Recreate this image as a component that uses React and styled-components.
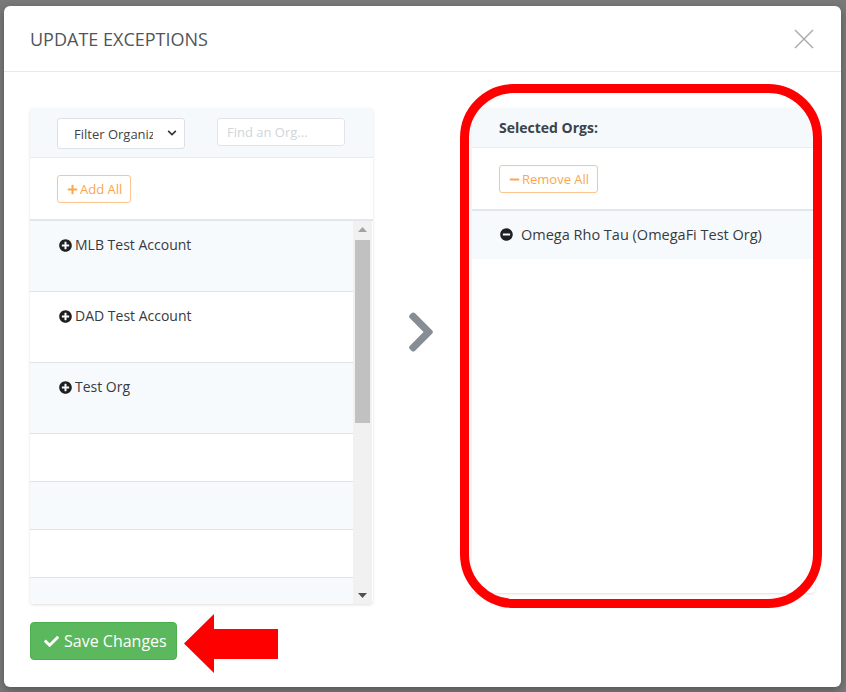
import React from "react";
import styled, { createGlobalStyle } from "styled-components";
import {
  FaPlusCircle,
  FaMinusCircle,
  FaPlus,
  FaMinus,
  FaCheck,
  FaChevronRight,
  FaChevronDown,
} from "react-icons/fa";

const GlobalStyle = createGlobalStyle`
  * { box-sizing: border-box; }
  body {
    margin: 0;
    background: #797979;
    font-family: "Open Sans", "Liberation Sans", sans-serif;
  }
`;

const Backdrop = styled.div`
  min-height: 692px;
  padding: 6px 5px 5px 4px;
`;

const Modal = styled.div`
  position: relative;
  width: 837px;
  height: 681px;
  background: #fff;
  border-radius: 6px;
  box-shadow: 0 3px 9px rgba(0, 0, 0, 0.3);
  display: flex;
  flex-direction: column;
`;

const Header = styled.div`
  height: 66px;
  padding: 0 27px 0 26px;
  border-bottom: 1px solid #e9e9e9;
  display: flex;
  align-items: center;
  justify-content: space-between;
`;

const Title = styled.h4`
  margin: 0;
  font-size: 18px;
  font-weight: 400;
  color: #505559;
`;

const CloseButton = styled.button`
  border: 0;
  background: none;
  padding: 0;
  width: 20px;
  height: 20px;
  cursor: pointer;
`;

const Body = styled.div`
  display: flex;
  padding: 36px 26px 0 26px;
`;

const LeftColumn = styled.div`
  width: 343px;
  display: flex;
  flex-direction: column;
`;

const Middle = styled.div`
  width: 99px;
  display: flex;
  justify-content: center;
  padding-top: 201px;
  padding-right: 3px;
  color: #868d94;
`;

const Panel = styled.div`
  width: 343px;
  height: ${(p) => p.$height}px;
  background: #fff;
  border-radius: 4px;
  box-shadow: 0 1px 3px rgba(0, 0, 0, 0.13);
  display: flex;
  flex-direction: column;
  overflow: hidden;
`;

const PanelHeader = styled.div`
  height: ${(p) => p.$height}px;
  flex-shrink: 0;
  background: #f5f9fc;
  border-bottom: 1px solid #e8ecef;
  padding: ${(p) => (p.$center ? "0 27px" : "10px 27px 0")};
  display: flex;
  align-items: ${(p) => (p.$center ? "center" : "flex-start")};
  gap: 32px;
`;

const HeaderLabel = styled.span`
  font-size: 14px;
  font-weight: 700;
  color: #3c4247;
`;

const SelectWrap = styled.div`
  position: relative;
  width: 128px;
  height: 31px;
  color: #333;
`;

const Select = styled.select`
  appearance: none;
  width: 100%;
  height: 100%;
  border: 1px solid #dde1e5;
  border-radius: 3px;
  background: #fff;
  padding: 0 31px 0 16px;
  font-family: inherit;
  font-size: 13px;
  color: #444;
`;

const SelectArrow = styled.span`
  position: absolute;
  right: 8px;
  top: 10px;
  pointer-events: none;
  display: flex;
`;

const SearchInput = styled.input`
  width: 128px;
  height: 28px;
  border: 1px solid #e1e5e9;
  border-radius: 3px;
  padding: 0 9px;
  font-family: inherit;
  font-size: 13px;
  color: #444;
  &::placeholder {
    color: #cfd5db;
  }
`;

const ActionBar = styled.div`
  height: 63px;
  flex-shrink: 0;
  padding: 17px 27px 0;
  border-bottom: 2px solid #e3e7eb;
`;

const OutlineButton = styled.button`
  height: 28px;
  padding: 0 8px 0 9px;
  border: 1px solid #fcc48e;
  border-radius: 3px;
  background: #fff;
  color: #fba650;
  font-family: inherit;
  font-size: 13px;
  display: inline-flex;
  align-items: center;
  gap: 2px;
  cursor: pointer;
`;

const ListArea = styled.div`
  flex: 1;
  min-height: 0;
  display: flex;
`;

const Rows = styled.div`
  flex: 1;
  overflow: hidden;
`;

const ScrollBar = styled.div`
  width: 19px;
  margin-right: 1px;
  background: #f1f1f1;
  display: flex;
  flex-direction: column;
`;

const ScrollButton = styled.div`
  height: 17px;
  flex-shrink: 0;
  display: flex;
  align-items: center;
  justify-content: center;
  color: ${(p) => (p.$down ? "#505050" : "#a3a3a3")};
`;

const Thumb = styled.div`
  height: 183px;
  margin: 2px 2px 0;
  background: #c1c1c1;
`;

const Row = styled.div`
  height: ${(p) => (p.$tall ? 71 : 48)}px;
  padding: 14px 29px 0;
  background: ${(p) => (p.$alt ? "#f7fafd" : "#fff")};
  border-bottom: 1px solid #dfe3e7;
  display: flex;
  align-items: flex-start;
  gap: 3px;
  font-size: 14px;
  line-height: 20px;
  color: #363b40;

  svg {
    margin-top: 4px;
    color: #1d1f21;
  }
`;

const SelectedRow = styled.div`
  height: 48px;
  flex-shrink: 0;
  padding: 0 27px 2px 28px;
  background: #f7fafd;
  display: flex;
  align-items: center;
  gap: 8px;
  font-size: 14.5px;
  color: #363b40;

  svg {
    color: #1d1f21;
  }
`;

const Footer = styled.div`
  margin-top: 18px;
  height: 38px;
  display: flex;
  align-items: center;
  gap: 7px;
`;

const SaveButton = styled.button`
  width: 147px;
  height: 38px;
  border: 1px solid #4cae4c;
  border-radius: 4px;
  background: #5cb85c;
  color: #fff;
  font-family: inherit;
  font-size: 16px;
  display: flex;
  align-items: center;
  gap: 5px;
  padding: 0 0 0 13px;
  cursor: pointer;
`;

const ArrowMark = styled.svg`
  flex-shrink: 0;
  margin-top: 5px;
`;

const Annotation = styled.div`
  position: absolute;
  left: 456px;
  top: 78px;
  width: 362px;
  height: 524px;
  border: 9px solid #ff0000;
  border-radius: 54px;
  pointer-events: none;
`;

const orgs = ["MLB Test Account", "DAD Test Account", "Test Org"];
const emptyRows = 5;

function Triangle({ down }) {
  return (
    <svg width="9" height="5" viewBox="0 0 9 5">
      <polygon
        points={down ? "0,0 9,0 4.5,5" : "0,5 9,5 4.5,0"}
        fill="currentColor"
      />
    </svg>
  );
}

export default function App() {
  return (
    <>
      <GlobalStyle />
      <Backdrop>
        <Modal>
          <Header>
            <Title>UPDATE EXCEPTIONS</Title>
            <CloseButton aria-label="Close">
              <svg width="20" height="20" viewBox="0 0 20 20">
                <path
                  d="M1 1 L19 19 M19 1 L1 19"
                  stroke="#a9a9a9"
                  strokeWidth="1.4"
                  fill="none"
                />
              </svg>
            </CloseButton>
          </Header>
          <Body>
            <LeftColumn>
              <Panel $height={496}>
                <PanelHeader $height={50}>
                  <SelectWrap>
                    <Select defaultValue="all">
                      <option value="all">Filter Organizations</option>
                    </Select>
                    <SelectArrow>
                      <FaChevronDown size={10} />
                    </SelectArrow>
                  </SelectWrap>
                  <SearchInput placeholder="Find an Org..." />
                </PanelHeader>
                <ActionBar>
                  <OutlineButton>
                    <FaPlus size={11} />
                    Add All
                  </OutlineButton>
                </ActionBar>
                <ListArea>
                  <Rows>
                    {orgs.map((name, i) => (
                      <Row key={name} $tall $alt={i % 2 === 0}>
                        <FaPlusCircle size={13} />
                        {name}
                      </Row>
                    ))}
                    {Array.from({ length: emptyRows }).map((_, i) => (
                      <Row key={i} $alt={(i + orgs.length) % 2 === 0} />
                    ))}
                  </Rows>
                  <ScrollBar>
                    <ScrollButton>
                      <Triangle />
                    </ScrollButton>
                    <Thumb />
                    <div style={{ flex: 1 }} />
                    <ScrollButton $down>
                      <Triangle down />
                    </ScrollButton>
                  </ScrollBar>
                </ListArea>
              </Panel>
              <Footer>
                <SaveButton>
                  <FaCheck size={15} />
                  Save Changes
                </SaveButton>
                <ArrowMark width="94" height="60" viewBox="0 0 94 60">
                  <polygon
                    points="0,29.5 30,0 30,15 94,15 94,45 30,45 30,59"
                    fill="#ff0000"
                  />
                </ArrowMark>
              </Footer>
            </LeftColumn>
            <Middle>
              <FaChevronRight size={46} />
            </Middle>
            <Panel $height={485}>
              <PanelHeader $height={40} $center>
                <HeaderLabel>Selected Orgs:</HeaderLabel>
              </PanelHeader>
              <ActionBar>
                <OutlineButton>
                  <FaMinus size={11} />
                  Remove All
                </OutlineButton>
              </ActionBar>
              <SelectedRow>
                <FaMinusCircle size={13} />
                Omega Rho Tau (OmegaFi Test Org)
              </SelectedRow>
            </Panel>
          </Body>
          <Annotation />
        </Modal>
      </Backdrop>
    </>
  );
}
